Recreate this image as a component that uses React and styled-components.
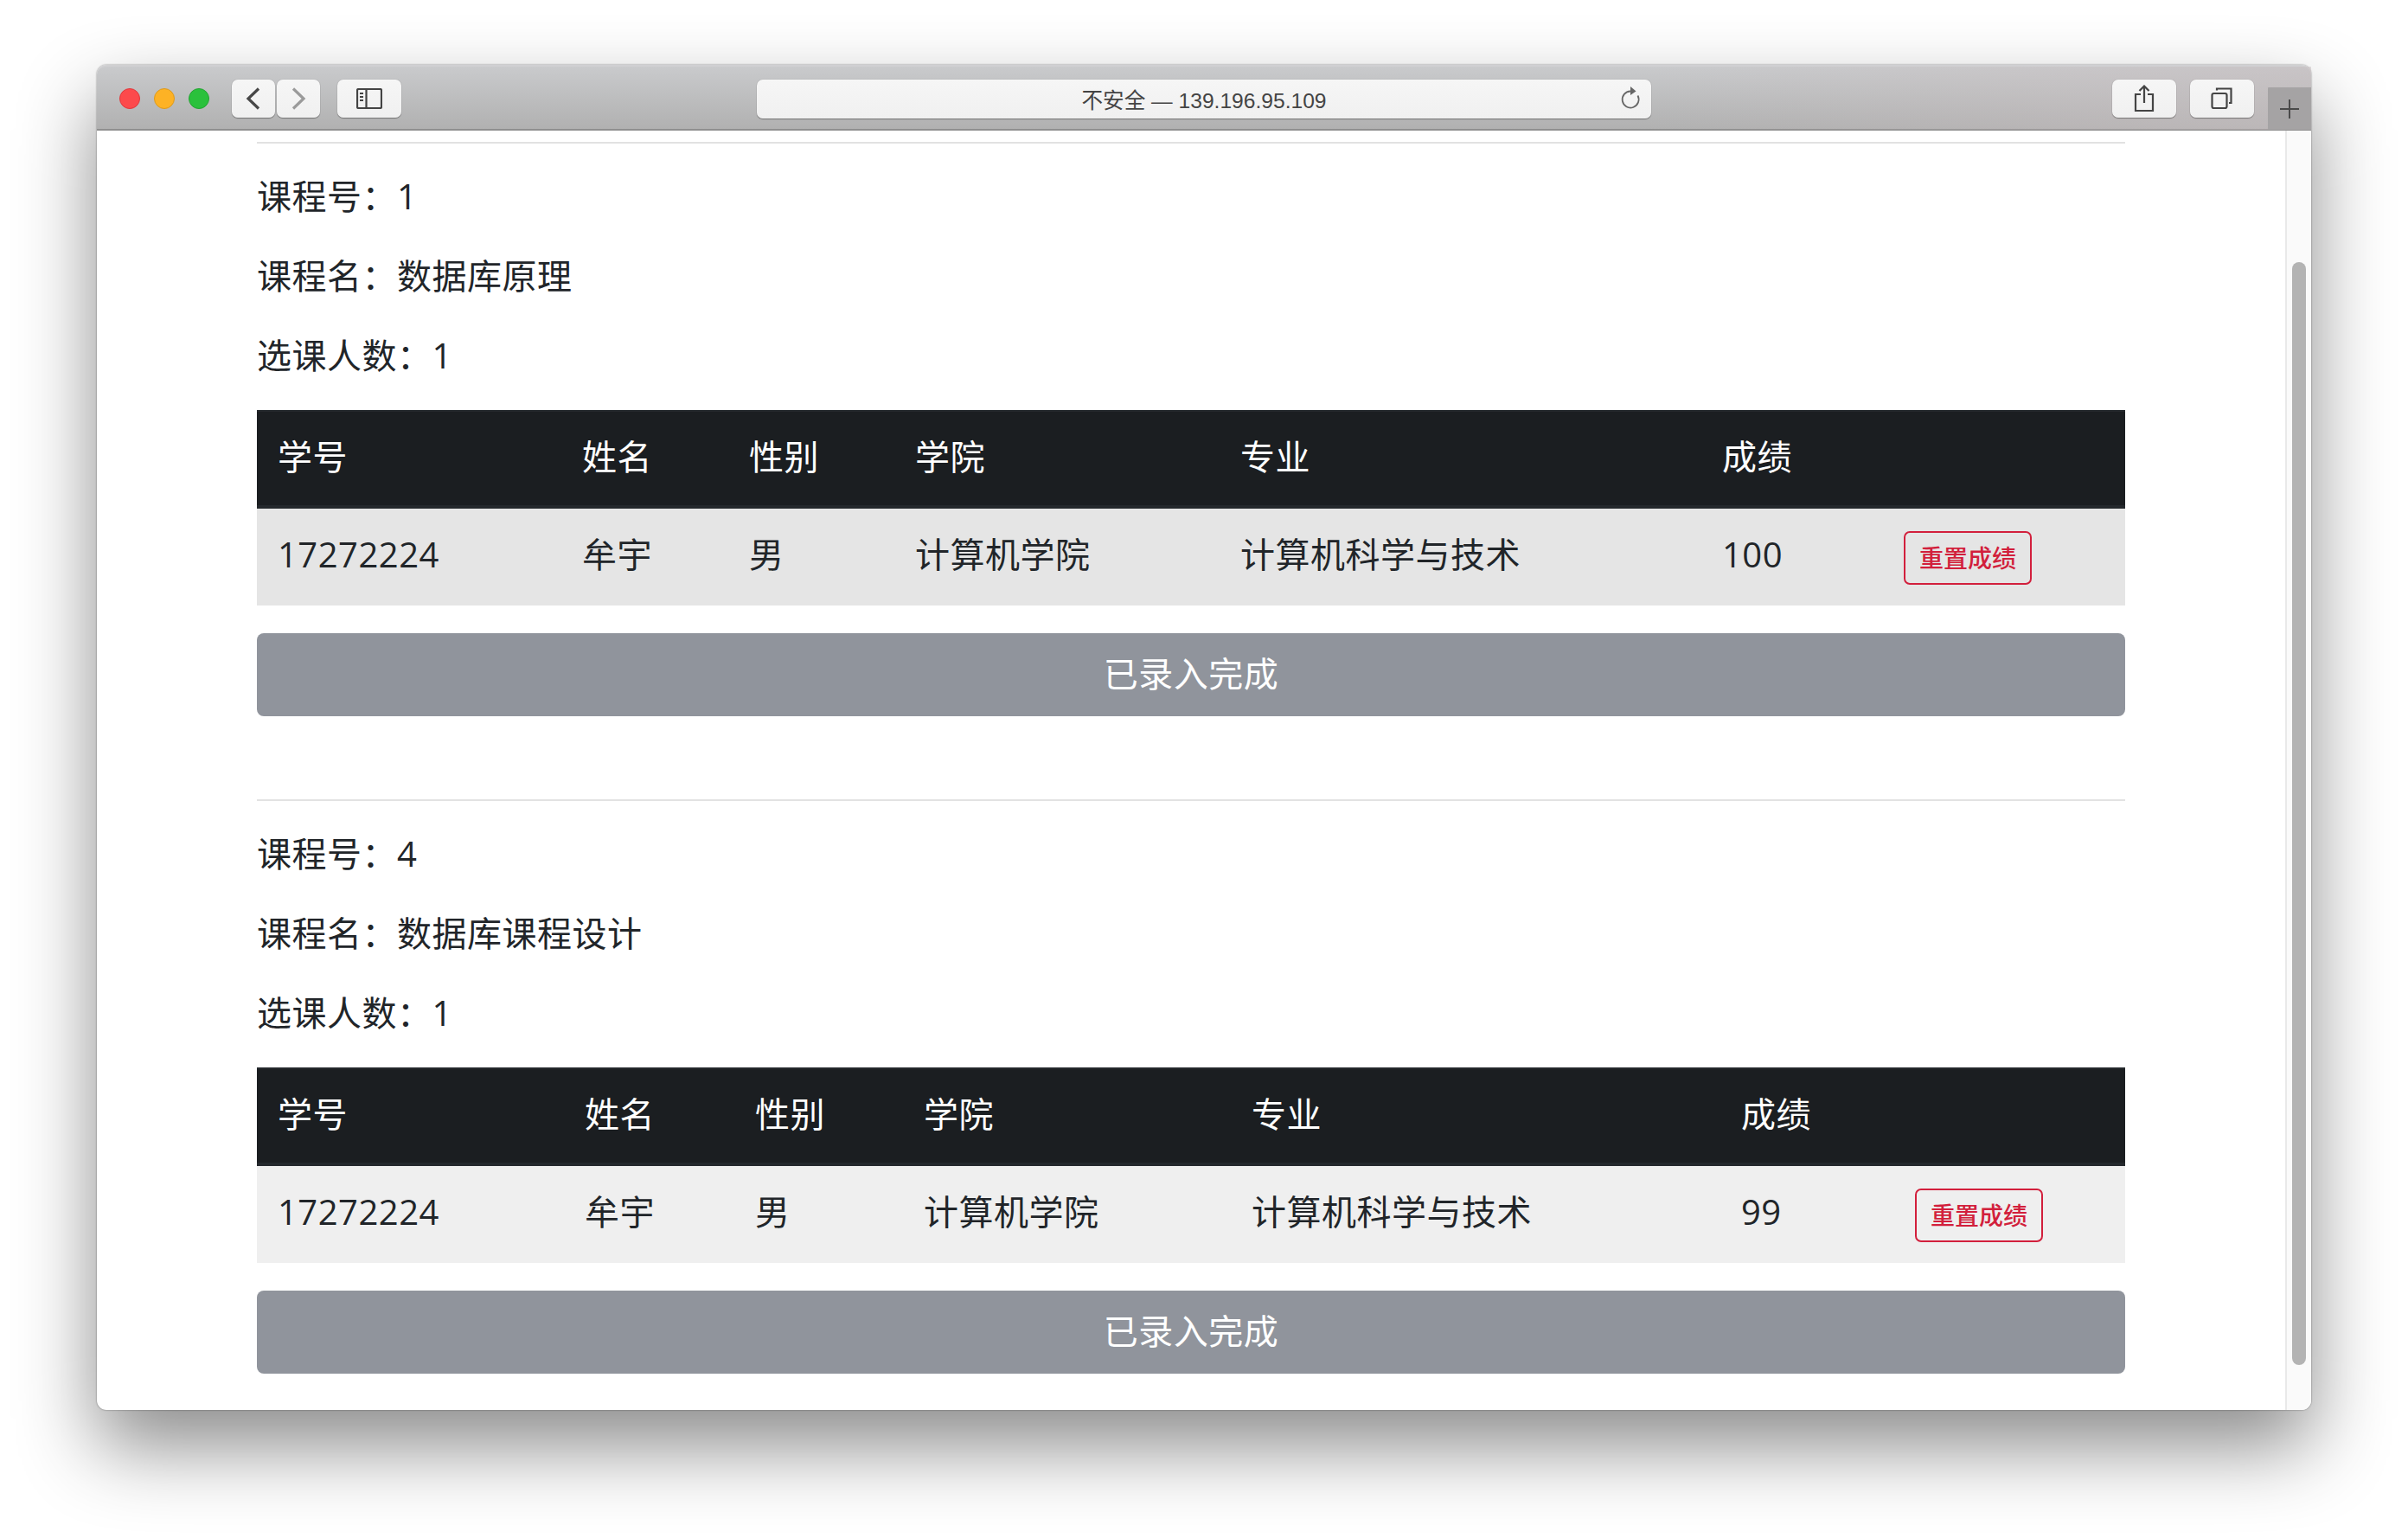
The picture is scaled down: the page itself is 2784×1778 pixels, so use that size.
import styled, { createGlobalStyle } from 'styled-components'

const GlobalStyle = createGlobalStyle`
    html, body {
        margin: 0;
        padding: 0;
        background: #fff;
    }
    * {
        box-sizing: border-box;
    }
`

const FONT = `"Open Sans", "Noto Sans CJK SC", sans-serif`

const Page = styled.div`
    width: 2784px;
    height: 1778px;
    padding: 75px 112px 148px;
    overflow: hidden;
    font-family: ${FONT};
    color: #212529;
`

const Window = styled.div`
    height: 1555px;
    display: flex;
    flex-direction: column;
    border-radius: 11px;
    background: #fff;
    box-shadow: 0 42px 90px rgba(0, 0, 0, 0.46), 0 0 2px rgba(0, 0, 0, 0.5);
`

const TitleBar = styled.div`
    flex: none;
    height: 76px;
    display: grid;
    grid-template-columns: 1fr 1034px 1fr;
    border-radius: 11px 11px 0 0;
    border-top: 2px solid #d0d0d2;
    border-bottom: 2px solid #8f8f8f;
    background: linear-gradient(#c9cacc, #b1b1b1);
`

const ToolsLeft = styled.div`
    display: flex;
    align-items: flex-start;
    padding: 15px 0 0 26px;
`

const ToolsRight = styled.div`
    display: flex;
    justify-content: flex-end;
    align-items: flex-start;
    padding-top: 15px;
    background: linear-gradient(100deg, rgba(200, 190, 192, 0), rgba(200, 190, 192, 0.5));
`

const Lights = styled.div`
    display: flex;
    gap: 16px;
    padding-top: 10px;
    margin-right: 26px;
`

const Light = styled.span`
    width: 24px;
    height: 24px;
    border-radius: 50%;
    background: ${p => p.$color};
    border: 1px solid ${p => p.$edge};
`

const ToolButton = styled.button`
    width: ${p => p.$w}px;
    height: 44px;
    margin: 0 0 0 ${p => p.$gap || 0}px;
    padding: 0;
    display: flex;
    align-items: center;
    justify-content: center;
    border: 0;
    border-radius: 7px;
    background: linear-gradient(#f6f6f6, #f0f0f0);
    box-shadow: 0 1px 1px rgba(0, 0, 0, 0.35), 0 0 1px rgba(0, 0, 0, 0.3);
`

const AddressBar = styled.div`
    position: relative;
    height: 45px;
    margin-top: 15px;
    padding-bottom: 2px;
    display: flex;
    align-items: center;
    justify-content: center;
    border-radius: 7px;
    background: linear-gradient(#f6f6f6, #f0f0f0);
    box-shadow: 0 1px 1px rgba(0, 0, 0, 0.35), 0 0 1px rgba(0, 0, 0, 0.3);
    font-family: "Liberation Sans", "Noto Sans CJK SC", sans-serif;
    font-size: 24.6px;
    color: #444;
`

const Reload = styled.svg`
    position: absolute;
    right: 12px;
    top: 7px;
`

const NewTab = styled.div`
    width: 50px;
    height: 49px;
    margin: 9px 0 0 16px;
    display: flex;
    align-items: center;
    justify-content: center;
    background: #a5a3a4;
    border-top-left-radius: 1px;
`

const Body = styled.div`
    flex: 1;
    min-height: 0;
    display: flex;
    overflow: hidden;
    border-radius: 0 0 11px 11px;
`

const Content = styled.div`
    flex: 1;
    padding: 13px 185px 0;
`

const Track = styled.div`
    flex: none;
    width: 30px;
    padding: 152px 0 0 6px;
    background: #fafafa;
    border-left: 2px solid #e9e9e9;
`

const Thumb = styled.div`
    width: 16px;
    height: 1275px;
    border-radius: 8px;
    background: #b3b3b3;
`

const Section = styled.section`
    margin-bottom: 96px;
`

const Rule = styled.hr`
    height: 2px;
    margin: 0 0 32px;
    border: 0;
    background: #e2e2e2;
`

const Info = styled.p`
    height: 60px;
    margin: 0 0 32px;
    font-size: 40px;
    line-height: 57px;
    letter-spacing: 0.5px;
`

const Table = styled.table`
    width: 2160px;
    table-layout: fixed;
    border-collapse: separate;
    border-spacing: 0;
    font-size: 40px;
    line-height: 60px;
    letter-spacing: 0.5px;
`

const HeadCell = styled.th`
    padding: 22px 24px 26px;
    text-align: left;
    font-weight: 400;
    color: #fff;
    background: #1b1e21;
    border-top: 2px solid #24282c;
    border-bottom: 4px solid #24282c;
`

const Cell = styled.td`
    padding: 23px 24px 27px;
    vertical-align: top;
    background: ${p => p.$tint};
`

const ResetButton = styled.button`
    display: block;
    width: 148px;
    height: 62px;
    margin: 3px 0 -3px;
    padding: 0;
    font-family: ${FONT};
    font-size: 28px;
    font-weight: 500;
    line-height: 42px;
    color: #d21f3c;
    background: transparent;
    border: 2px solid #d21f3c;
    border-radius: 7px;
`

const DoneButton = styled.button`
    display: block;
    width: 100%;
    height: 96px;
    margin-top: 32px;
    padding: 0 0 3px;
    font-family: ${FONT};
    font-size: 40px;
    line-height: 60px;
    letter-spacing: 0.5px;
    color: #fff;
    background: #90949c;
    border: 0;
    border-radius: 8px;
`

const HEADERS = ['学号', '姓名', '性别', '学院', '专业', '成绩', '']

const COURSES = [
    { id: 1, name: '数据库原理', score: 100, tint: '#e5e5e5', widths: [352, 193, 192, 376, 557, 210, 280] },
    { id: 4, name: '数据库课程设计', score: 99, tint: '#efefef', widths: [355, 197, 195, 379, 566, 201, 267] },
]

function Course({ course }) {
    return (
        <Section>
            <Rule />
            <Info>课程号：{course.id}</Info>
            <Info>课程名：{course.name}</Info>
            <Info>选课人数：1</Info>
            <Table>
                <colgroup>
                    {course.widths.map((w, i) => <col key={i} style={{ width: w }} />)}
                </colgroup>
                <thead>
                    <tr>
                        {HEADERS.map((h, i) => <HeadCell key={i}>{h}</HeadCell>)}
                    </tr>
                </thead>
                <tbody>
                    <tr>
                        <Cell $tint={course.tint}>17272224</Cell>
                        <Cell $tint={course.tint}>牟宇</Cell>
                        <Cell $tint={course.tint}>男</Cell>
                        <Cell $tint={course.tint}>计算机学院</Cell>
                        <Cell $tint={course.tint}>计算机科学与技术</Cell>
                        <Cell $tint={course.tint}>{course.score}</Cell>
                        <Cell $tint={course.tint}><ResetButton>重置成绩</ResetButton></Cell>
                    </tr>
                </tbody>
            </Table>
            <DoneButton>已录入完成</DoneButton>
        </Section>
    )
}

export default function App() {
    return (<>
        <GlobalStyle />
        <Page>
            <Window>
                <TitleBar>
                    <ToolsLeft>
                        <Lights>
                            <Light $color="#fc4a4c" $edge="#e0383c" />
                            <Light $color="#fdb225" $edge="#dd9a1c" />
                            <Light $color="#2ac13c" $edge="#22a431" />
                        </Lights>
                        <ToolButton $w={50}>
                            <svg width="18" height="26" viewBox="0 0 18 26" fill="none" stroke="#474747" strokeWidth="3.2">
                                <path d="M15 1.5 3 13l12 11.5" />
                            </svg>
                        </ToolButton>
                        <ToolButton $w={50} $gap={2}>
                            <svg width="18" height="26" viewBox="0 0 18 26" fill="none" stroke="#9a9a9a" strokeWidth="3.2">
                                <path d="M3 1.5 15 13 3 24.5" />
                            </svg>
                        </ToolButton>
                        <ToolButton $w={74} $gap={20}>
                            <svg width="30" height="24" viewBox="0 0 30 24" fill="none" stroke="#444" strokeWidth="2.2">
                                <rect x="1" y="1" width="28" height="22" rx="1.5" />
                                <path d="M11.5 1v22" />
                                <path d="M4 6h4M4 10h4M4 14h4" />
                            </svg>
                        </ToolButton>
                    </ToolsLeft>
                    <AddressBar>
                        不安全 — 139.196.95.109
                        <Reload width="24" height="28" viewBox="0 0 24 28" fill="none" stroke="#666" strokeWidth="1.8">
                            <path d="M12 6.500a9.500 9.500 0 1 0 8.500 5" />
                            <path d="M12 1l6.500 5.500L12 11z" fill="#666" stroke="none" />
                        </Reload>
                    </AddressBar>
                    <ToolsRight>
                        <ToolButton $w={74}>
                            <svg width="24" height="32" viewBox="0 0 24 32" fill="none" stroke="#444" strokeWidth="2.2">
                                <path d="M8 11H2v19h20V11h-6" />
                                <path d="M12 21V2M6.5 7 12 1.500 17.500 7" />
                            </svg>
                        </ToolButton>
                        <ToolButton $w={74} $gap={16}>
                            <svg width="26" height="26" viewBox="0 0 26 26" fill="none" stroke="#444" strokeWidth="2.2">
                                <rect x="1.500" y="7" width="17" height="17" rx="2" />
                                <path d="M7 3.500V1.500h16.500V18H21" />
                            </svg>
                        </ToolButton>
                        <NewTab>
                            <svg width="22" height="22" viewBox="0 0 22 22" stroke="#4a4a4a" strokeWidth="2">
                                <path d="M11 0v22M0 11h22" />
                            </svg>
                        </NewTab>
                    </ToolsRight>
                </TitleBar>
                <Body>
                    <Content>
                        {COURSES.map(c => <Course key={c.id} course={c} />)}
                    </Content>
                    <Track>
                        <Thumb />
                    </Track>
                </Body>
            </Window>
        </Page>
    </>)
}
